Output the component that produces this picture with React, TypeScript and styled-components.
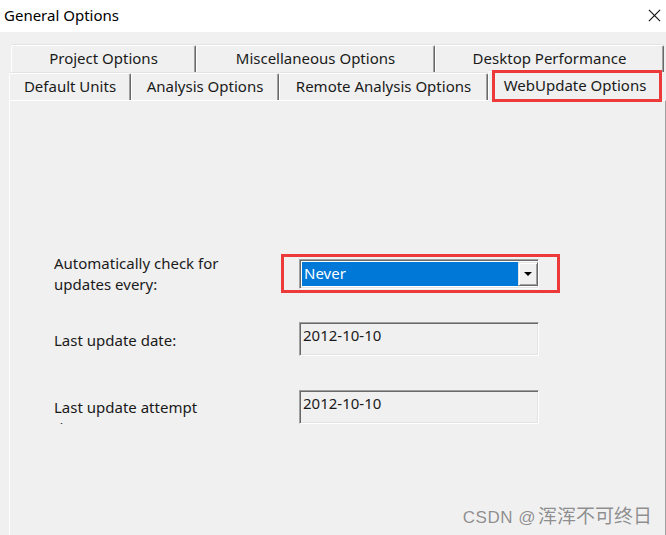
import React from 'react';
import styled, { createGlobalStyle } from 'styled-components';

const GlobalStyle = createGlobalStyle`
  html, body {
    margin: 0;
    padding: 0;
    background: #f0f0f0;
  }
  body {
    font-family: "Noto Sans", "Open Sans", sans-serif;
    font-size: 15px;
    color: #1a1a1a;
  }
`;

const backTabs = [
  { label: 'Project Options', width: 185 },
  { label: 'Miscellaneous Options', width: 239 },
  { label: 'Desktop Performance', width: 229 },
];

const frontTabs = [
  { label: 'Default Units', width: 122 },
  { label: 'Analysis Options', width: 148 },
  { label: 'Remote Analysis Options', width: 209 },
  { label: 'WebUpdate Options', width: 174, active: true },
];

function App() {
  return (
    <>
      <GlobalStyle />
      <Window>
        <TitleBar>
          <Title>General Options</Title>
          <CloseIcon viewBox="0 0 14 14">
            <path d="M1 1 L13 13 M13 1 L1 13" stroke="#111" strokeWidth="1.2" fill="none" />
          </CloseIcon>
        </TitleBar>

        <Body>
          <TabRow $height={27} $indent={2}>
            {backTabs.map((t) => (
              <Tab key={t.label} $width={t.width}>{t.label}</Tab>
            ))}
          </TabRow>
          <TabRow $height={28} $indent={0}>
            {frontTabs.map((t) => (
              <Tab key={t.label} $width={t.width} $active={t.active}>{t.label}</Tab>
            ))}
          </TabRow>

          <Panel>
            <FormRow $height={42} $gap={152}>
              <Label>Automatically check for<br />updates every:</Label>
              <Marked>
                <Combo>
                  <Selected>Never</Selected>
                  <DropButton><Arrow /></DropButton>
                </Combo>
              </Marked>
            </FormRow>

            <FormRow $height={34} $gap={27}>
              <Label $nudge={2}>Last update date:</Label>
              <TextBox>2012-10-10</TextBox>
            </FormRow>

            <FormRow $height={33} $gap={34}>
              <ClippedLabel>Last update attempt<br />time:</ClippedLabel>
              <TextBox>2012-10-10</TextBox>
            </FormRow>
          </Panel>
        </Body>

        <Watermark>
          <Latin>CSDN @</Latin>浑浑不可终日
        </Watermark>
      </Window>
    </>
  );
}

export default App;

const Window = styled.div`
  position: relative;
  width: 666px;
  height: 535px;
  display: flex;
  flex-direction: column;
  overflow: hidden;
  background: #f0f0f0;
`;

const TitleBar = styled.div`
  height: 32px;
  flex-shrink: 0;
  background: #ffffff;
  display: flex;
  align-items: center;
  justify-content: space-between;
  padding: 0 4px 0 4px;
`;

const Title = styled.span`
  font-size: 15px;
  color: #000;
  margin-top: -3px;
`;

const CloseIcon = styled.svg`
  width: 13px;
  height: 13px;
  margin-right: 1px;
  margin-top: -1px;
`;

const Body = styled.div`
  flex: 1;
  display: flex;
  flex-direction: column;
  padding: 13px 0 0 9px;
`;

const TabRow = styled.div<{ $height: number; $indent: number }>`
  display: flex;
  align-items: flex-end;
  height: ${(p) => p.$height}px;
  padding-left: ${(p) => p.$indent}px;
`;

const Tab = styled.div<{ $width: number; $active?: boolean }>`
  position: relative;
  z-index: ${(p) => (p.$active ? 2 : 1)};
  box-sizing: border-box;
  width: ${(p) => p.$width}px;
  height: ${(p) => (p.$active ? 30 : 27)}px;
  margin-bottom: ${(p) => (p.$active ? -1 : 0)}px;
  padding-bottom: ${(p) => (p.$active ? 4 : 2)}px;
  display: flex;
  align-items: center;
  justify-content: center;
  white-space: nowrap;
  background: #f0f0f0;
  border-top: 1px solid #ffffff;
  border-left: 1px solid #ffffff;
  border-right: 1px solid #696969;
  border-radius: 2px 2px 0 0;
  box-shadow: inset -1px 0 #a0a0a0, 0 -1px #e3e3e3;

  ${(p) =>
    p.$active &&
    `
    &::after {
      content: '';
      position: absolute;
      top: -2px;
      left: 3px;
      right: -1px;
      bottom: -1px;
      border: 3px solid #ec3a3a;
    }
  `}
`;

const Panel = styled.div`
  position: relative;
  z-index: 1;
  flex: 1;
  display: flex;
  flex-direction: column;
  padding-left: 44px;
  background: #f0f0f0;
  border-top: 1px solid #ffffff;
  border-left: 1px solid #ffffff;
  border-right: 1px solid #a0a0a0;
`;

const FormRow = styled.div<{ $height: number; $gap: number }>`
  display: grid;
  grid-template-columns: 245px 240px;
  align-items: center;
  height: ${(p) => p.$height}px;
  margin-top: ${(p) => p.$gap}px;
`;

const Label = styled.div<{ $nudge?: number }>`
  line-height: 21px;
  white-space: nowrap;
  padding-top: ${(p) => p.$nudge ?? 0}px;
`;

const ClippedLabel = styled.div`
  align-self: start;
  margin-top: 7px;
  height: 27px;
  overflow: hidden;
  line-height: 21px;
  white-space: nowrap;
`;

const Marked = styled.div`
  position: relative;

  &::after {
    content: '';
    position: absolute;
    top: -5px;
    left: -18px;
    right: -21px;
    bottom: -4px;
    border: 3px solid #ec3a3a;
  }
`;

const Combo = styled.div`
  box-sizing: border-box;
  width: 240px;
  height: 30px;
  display: flex;
  padding: 2px 0 0 2px;
  background: #ffffff;
  border-top: 1px solid #a0a0a0;
  border-left: 1px solid #a0a0a0;
  border-right: 1px solid #ffffff;
  border-bottom: 1px solid #ffffff;
  box-shadow: inset 1px 1px #696969, inset -1px -1px #e3e3e3;
`;

const Selected = styled.div`
  flex: 1;
  height: 24px;
  line-height: 23px;
  padding-left: 2px;
  background: #0078d7;
  color: #ffffff;
`;

const DropButton = styled.div`
  box-sizing: border-box;
  width: 20px;
  height: 24px;
  display: flex;
  align-items: center;
  justify-content: center;
  background: #f0f0f0;
  border-top: 1px solid #e3e3e3;
  border-left: 1px solid #e3e3e3;
  border-right: 1px solid #696969;
  border-bottom: 1px solid #696969;
  box-shadow: inset 1px 1px #ffffff, inset -1px -1px #a0a0a0;
`;

const Arrow = styled.span`
  width: 0;
  height: 0;
  border-left: 4px solid transparent;
  border-right: 4px solid transparent;
  border-top: 4px solid #000;
`;

const TextBox = styled.div`
  box-sizing: border-box;
  width: 240px;
  height: 100%;
  padding: 2px 3px;
  line-height: 21px;
  background: #f0f0f0;
  border-top: 1px solid #a0a0a0;
  border-left: 1px solid #a0a0a0;
  border-right: 1px solid #ffffff;
  border-bottom: 1px solid #ffffff;
  box-shadow: inset 1px 1px #696969, inset -1px -1px #e3e3e3;
`;

const Watermark = styled.div`
  position: absolute;
  z-index: 5;
  right: 14px;
  bottom: 4px;
  font-family: "Noto Sans CJK SC", "Noto Sans", sans-serif;
  font-size: 19px;
  line-height: 26px;
  color: #8e8e8e;
  text-shadow: 0 0 1px #ffffff;
  white-space: nowrap;
`;

const Latin = styled.span`
  font-family: "Liberation Sans", sans-serif;
  font-size: 17px;
  margin-right: 2px;
  letter-spacing: 0.5px;
`;
